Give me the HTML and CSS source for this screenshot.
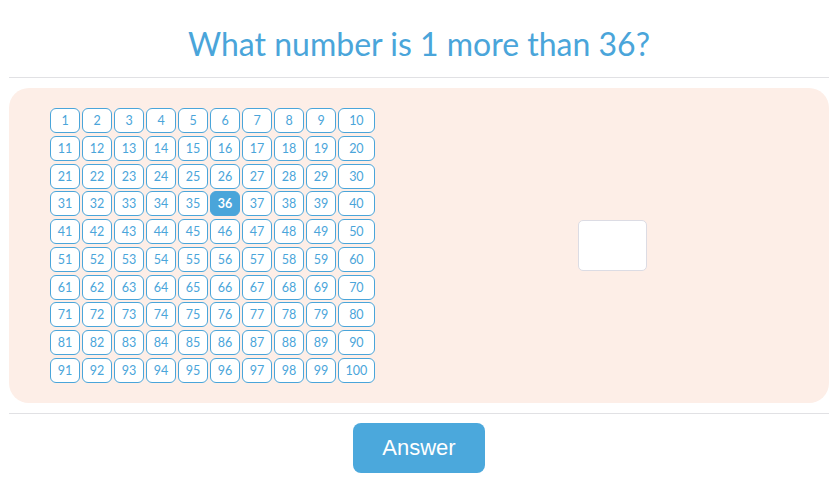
FILE: index.html
```html
<!DOCTYPE html>
<html lang="en">

<head>
    <meta charset="UTF-8">
    <meta name="viewport" content="width=device-width, initial-scale=1.0">
    <title>One more</title>
    <link rel="stylesheet" href="styles.css">
</head>

<body>
    <div class="page">
        <div class="header">
            <h1 class="question">What number is 1 more than 36?</h1>
        </div>
        <div class="rule"></div>
        <div class="panel">
            <div class="hundred" id="hundred"></div>
            <div class="answer-area">
                <div class="answer-box"></div>
            </div>
        </div>
        <div class="rule rule-bottom"></div>
        <div class="footer">
            <button class="btn-answer">Answer</button>
        </div>
    </div>

    <script>
        // monta o quadro de 1 a 100
        const hundred = document.getElementById('hundred');
        for (let i = 1; i <= 100; i++) {
            const cell = document.createElement('div');
            cell.className = 'cell';
            if (i === 36) {
                cell.className += ' cell-active';
            }
            cell.innerText = i;
            hundred.appendChild(cell);
        }
    </script>
</body>

</html>
```

FILE: styles.css
```css
body {
    margin: 0;
    padding: 0 11px 0 9px;
    background-color: #ffffff;
    font-family: 'Lato', 'Noto Sans', sans-serif;
}

.header {
    padding: 25px 0 14px;
    text-align: center;
}

.question {
    margin: 0;
    font-size: 32px;
    font-weight: normal;
    line-height: 1.2;
    color: #4aa5da;
}

.rule {
    border-top: 1px solid #e1e1e4;
}

.panel {
    display: flex;
    align-items: center;
    gap: 22px;
    margin-top: 10px;
    padding: 20px 0 20px 41px;
    background-color: #fdeee7;
    border-radius: 20px;
}

.hundred {
    display: grid;
    grid-template-columns: repeat(10, auto);
    column-gap: 2px;
    row-gap: 2.7px;
}

.cell {
    display: flex;
    align-items: center;
    justify-content: center;
    box-sizing: border-box;
    min-width: 30px;
    height: 25px;
    padding: 0 6.5px;
    background-color: #ffffff;
    border: 1px solid #4aa5da;
    border-radius: 6px;
    color: #4aa5da;
    font-size: 12.5px;
}

.cell-active {
    background-color: #4aa5da;
    color: #ffffff;
    font-weight: bold;
}

.answer-area {
    flex: 1;
    display: flex;
    justify-content: center;
}

.answer-box {
    width: 69px;
    height: 51px;
    box-sizing: border-box;
    background-color: #ffffff;
    border: 1px solid #dcdce4;
    border-radius: 5px;
}

.rule-bottom {
    margin-top: 10px;
}

.footer {
    display: flex;
    justify-content: center;
    padding-top: 9px;
}

.btn-answer {
    width: 132px;
    height: 50px;
    background-color: #4ba8dc;
    color: #ffffff;
    border: 0px;
    border-radius: 8px;
    font-family: 'Liberation Sans', Arial, sans-serif;
    font-size: 22px;
    cursor: pointer;
}
```
